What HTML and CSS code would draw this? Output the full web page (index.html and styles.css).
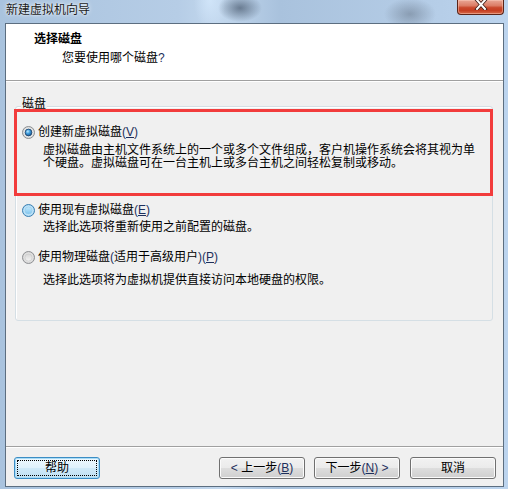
FILE: index.html
```html
<!DOCTYPE html>
<html lang="zh-CN">
<head>
<meta charset="utf-8">
<title>新建虚拟机向导</title>
<link rel="stylesheet" href="styles.css">
</head>
<body>
<div class="frame">
  <div class="titlebar">
    <div class="title">新建虚拟机向导</div>
    <div class="close">
      <svg width="14" height="10" viewBox="0 0 14 10">
        <path d="M3 0 L11 9 M11 0 L3 9" stroke="#3a1a14" stroke-width="3.6" stroke-linecap="square"/>
        <path d="M3 0 L11 9 M11 0 L3 9" stroke="#ffffff" stroke-width="2" stroke-linecap="square"/>
      </svg>
    </div>
  </div>
  <div class="client">
    <div class="header">
      <div class="h-title">选择磁盘</div>
      <div class="h-sub">您要使用哪个磁盘<span class="ak">?</span></div>
    </div>
    <div class="body">
      <div class="group">
        <div class="legend">磁盘</div>
        <div class="opt opt1">
          <svg class="radio" width="13" height="13" viewBox="0 0 13 13">
            <defs>
              <radialGradient id="r1ring" cx="0.5" cy="0.5" r="0.5">
                <stop offset="0.5" stop-color="#f6f6f6"/>
                <stop offset="1" stop-color="#d2d2d2"/>
              </radialGradient>
              <radialGradient id="r1dot" cx="0.4" cy="0.35" r="0.7">
                <stop offset="0" stop-color="#b8e8ff"/>
                <stop offset="0.45" stop-color="#3e9cdc"/>
                <stop offset="1" stop-color="#17508a"/>
              </radialGradient>
            </defs>
            <circle cx="6.5" cy="6.5" r="6" fill="url(#r1ring)" stroke="#8c8f92"/>
            <circle cx="6.5" cy="6.5" r="3.4" fill="url(#r1dot)" stroke="#1c3f66" stroke-width="0.8"/>
          </svg>
          <span>创建新虚拟磁盘<span class="ak">(<u>V</u>)</span></span>
        </div>
        <div class="desc d1">虚拟磁盘由主机文件系统上的一个或多个文件组成，客户机操作系统会将其视为单<br>个硬盘。虚拟磁盘可在一台主机上或多台主机之间轻松复制或移动。</div>
        <div class="opt opt2">
          <svg class="radio" width="13" height="13" viewBox="0 0 13 13">
            <defs>
              <radialGradient id="r2ring" cx="0.5" cy="0.5" r="0.5">
                <stop offset="0.4" stop-color="#e6f6fe"/>
                <stop offset="1" stop-color="#9fd3f2"/>
              </radialGradient>
              <linearGradient id="r2in" x1="0" y1="0" x2="0" y2="1">
                <stop offset="0" stop-color="#c4e8fb"/>
                <stop offset="1" stop-color="#7fc5ee"/>
              </linearGradient>
            </defs>
            <circle cx="6.5" cy="6.5" r="6" fill="url(#r2ring)" stroke="#3c7fb1"/>
            <circle cx="6.5" cy="6.5" r="3.6" fill="url(#r2in)" stroke="#8ec8ea" stroke-width="0.6"/>
          </svg>
          <span>使用现有虚拟磁盘<span class="ak">(<u>E</u>)</span></span>
        </div>
        <div class="desc d2">选择此选项将重新使用之前配置的磁盘。</div>
        <div class="opt opt3">
          <svg class="radio" width="13" height="13" viewBox="0 0 13 13">
            <defs>
              <radialGradient id="r3ring" cx="0.5" cy="0.5" r="0.5">
                <stop offset="0.4" stop-color="#f7f7f7"/>
                <stop offset="1" stop-color="#cfcfcf"/>
              </radialGradient>
              <linearGradient id="r3in" x1="0" y1="0" x2="0" y2="1">
                <stop offset="0" stop-color="#d6d6d6"/>
                <stop offset="1" stop-color="#f4f4f4"/>
              </linearGradient>
            </defs>
            <circle cx="6.5" cy="6.5" r="6" fill="url(#r3ring)" stroke="#8f9194"/>
            <circle cx="6.5" cy="6.5" r="3.6" fill="url(#r3in)" stroke="#c4c4c4" stroke-width="0.6"/>
          </svg>
          <span>使用物理磁盘<span class="ak">(</span>适用于高级用户<span class="ak">)(<u>P</u>)</span></span>
        </div>
        <div class="desc d3">选择此选项将为虚拟机提供直接访问本地硬盘的权限。</div>
      </div>
    </div>
    <div class="footer">
      <div class="btn btn-default"><span class="focus">帮助</span></div>
      <div class="spacer"></div>
      <div class="btn btn-back"><span><span class="ak">&lt;</span> 上一步<span class="ak">(<u>B</u>)</span></span></div>
      <div class="btn btn-next"><span>下一步<span class="ak">(<u>N</u>) &gt;</span></span></div>
      <div class="btn btn-cancel"><span>取消</span></div>
    </div>
  </div>
  <div class="highlight"></div>
</div>
</body>
</html>
```
FILE: styles.css
```css
* { box-sizing: border-box; }
html, body { margin: 0; padding: 0; }
body {
  width: 508px;
  height: 489px;
  overflow: hidden;
  font-family: "Liberation Sans", "Noto Sans CJK SC", sans-serif;
  font-size: 12px;
  color: #000;
}
.frame {
  position: relative;
  width: 508px;
  height: 489px;
  padding: 0 4px 2px 5px;
  display: flex;
  flex-direction: column;
  background:
    radial-gradient(ellipse 22px 14px at 240px 8px, rgba(40,55,75,0.55), rgba(40,55,75,0) 100%),
    radial-gradient(ellipse 26px 16px at 410px 14px, rgba(60,70,85,0.35), rgba(60,70,85,0) 100%),
    radial-gradient(ellipse 16px 30px at 210px 0, rgba(210,230,250,0.9), rgba(210,230,250,0) 100%),
    linear-gradient(90deg, #a9c3de 0%, #b6cde6 35%, #c3d8ee 43%, #a9c2dd 55%, #b3cbe5 80%, #bcd4ee 100%);
}
.titlebar {
  height: 23px;
  display: flex;
  justify-content: space-between;
  align-items: flex-start;
}
.title {
  margin: 3px 0 0 1px;
  line-height: 14px;
  color: #1a1a1a;
  text-shadow: 0 0 5px rgba(255,255,255,0.9), 0 0 2px rgba(255,255,255,0.8);
}
.close {
  width: 47px;
  height: 15px;
  border: 1px solid #5b2418;
  border-top: none;
  border-radius: 0 0 4px 4px;
  background: linear-gradient(#e9a796 0%, #dc7d66 40%, #c9482c 55%, #c63f22 75%, #d66a4a 100%);
  box-shadow: inset 0 0 0 1px rgba(255,210,195,0.45);
  display: flex;
  justify-content: center;
  align-items: flex-start;
}
.client {
  flex: 1;
  border: 1px solid #5c6e80;
  background: #f0f0f0;
  display: flex;
  flex-direction: column;
}
.header {
  height: 57px;
  background: #fff;
  border-bottom: 1px solid #a0a0a0;
  padding: 8px 0 0 28px;
}
.h-title {
  font-weight: bold;
  line-height: 14px;
}
.h-sub {
  line-height: 14px;
  margin: 5px 0 0 28px;
}
.ak { color: #1d2f5c; }
.ak u { text-underline-offset: 1px; }
.body {
  flex: 1;
  border-top: 1px solid #fff;
  padding: 24px 10px 0 9px;
}
.group {
  height: 215px;
  border: 1px solid #d5dfe5;
  border-radius: 3px;
  box-shadow: inset 1px 1px 0 #fff;
}
.legend {
  display: table;
  margin: -10px 0 0 5px;
  padding: 0 1px;
  line-height: 14px;
  background: #f0f0f0;
}
.opt {
  display: flex;
  align-items: center;
  gap: 3px;
  margin-left: 6px;
  line-height: 14px;
}
.radio { flex: none; display: block; }
.opt1 { margin-top: 14px; }
.opt2 { margin-top: 33px; }
.opt3 { margin-top: 16px; }
.desc {
  margin-left: 27px;
  line-height: 13px;
  white-space: nowrap;
}
.d1 { margin-top: 5px; }
.d2 { margin-top: 4px; }
.d3 { margin-top: 10px; }
.footer {
  height: 40px;
  border-top: 1px solid #a0a0a0;
  box-shadow: inset 0 1px 0 #fff;
  display: flex;
  align-items: flex-start;
  padding: 10px 7px 0 8px;
}
.spacer { flex: 1; }
.btn {
  width: 86px;
  height: 22px;
  border: 1px solid #707070;
  border-radius: 3px;
  background: linear-gradient(#f2f2f2 0%, #ebebeb 48%, #dddddd 52%, #cfcfcf 100%);
  box-shadow: inset 0 0 0 1px #fbfbfb;
  display: flex;
  align-items: center;
  justify-content: center;
  line-height: 14px;
  white-space: pre;
}
.btn-default {
  border-color: #3c8dc4;
  background: linear-gradient(#eef8fe 0%, #e0f2fc 48%, #cfe9f8 52%, #bfe0f3 100%);
  box-shadow: inset 0 0 0 1px #a8dcf7;
  padding: 2px;
}
.focus {
  flex: 1;
  align-self: stretch;
  display: flex;
  align-items: center;
  justify-content: center;
  outline: 1px dotted #000;
  outline-offset: -1px;
}
.btn-next { margin-left: 9px; }
.btn-cancel { margin-left: 10px; }
.highlight {
  position: absolute;
  left: 14px;
  top: 109px;
  width: 479px;
  height: 87px;
  border: 3px solid #f23c3c;
  pointer-events: none;
}
```
